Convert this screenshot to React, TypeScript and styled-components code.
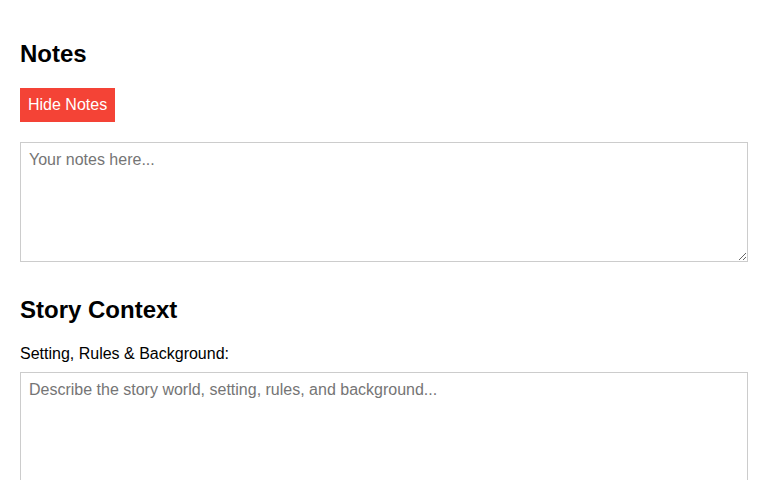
import React, { useState } from "react";
import styled, { createGlobalStyle } from "styled-components";

const GlobalStyle = createGlobalStyle`
  body {
    margin: 0;
    background: #ffffff;
    font-family: "Liberation Sans", Arial, sans-serif;
    color: #000;
  }
`;

const Page = styled.div`
  padding: 20px;
  display: flex;
  flex-direction: column;
`;

const Section = styled.section`
  display: flex;
  flex-direction: column;
  align-items: flex-start;
  margin-bottom: 34px;
`;

const Heading = styled.h2<{ $first?: boolean }>`
  font-size: 24px;
  font-weight: bold;
  line-height: normal;
  margin: ${(p) => (p.$first ? "20px 0" : "0 0 21px")};
`;

const ToggleButton = styled.button`
  font-family: inherit;
  font-size: 16px;
  background: #f44336;
  color: #fff;
  border: none;
  border-radius: 0;
  padding: 8px;
  cursor: pointer;
  margin-bottom: 20px;
`;

const Label = styled.label`
  display: block;
  font-size: 16px;
  margin-bottom: 9px;
`;

const TextBox = styled.textarea<{ $height: number }>`
  display: block;
  box-sizing: border-box;
  width: 100%;
  height: ${(p) => p.$height}px;
  padding: 8px;
  border: 1px solid #ccc;
  font-family: "Liberation Sans", Arial, sans-serif;
  font-size: 16px;
  color: #000;
  &::placeholder {
    color: #757575;
  }
`;

const App = () => {
  const [showNotes, setShowNotes] = useState(true);
  const [notes, setNotes] = useState("");
  const [context, setContext] = useState("");

  return (
    <Page>
      <GlobalStyle />
      <Section>
        <Heading $first>Notes</Heading>
        <ToggleButton onClick={() => setShowNotes(!showNotes)}>
          {showNotes ? "Hide Notes" : "Show Notes"}
        </ToggleButton>
        {showNotes && (
          <TextBox
            $height={120}
            placeholder="Your notes here..."
            value={notes}
            onChange={(e) => setNotes(e.target.value)}
          />
        )}
      </Section>
      <Section>
        <Heading>Story Context</Heading>
        <Label>Setting, Rules &amp; Background:</Label>
        <TextBox
          $height={160}
          placeholder="Describe the story world, setting, rules, and background..."
          value={context}
          onChange={(e) => setContext(e.target.value)}
        />
      </Section>
    </Page>
  );
};

export default App;
